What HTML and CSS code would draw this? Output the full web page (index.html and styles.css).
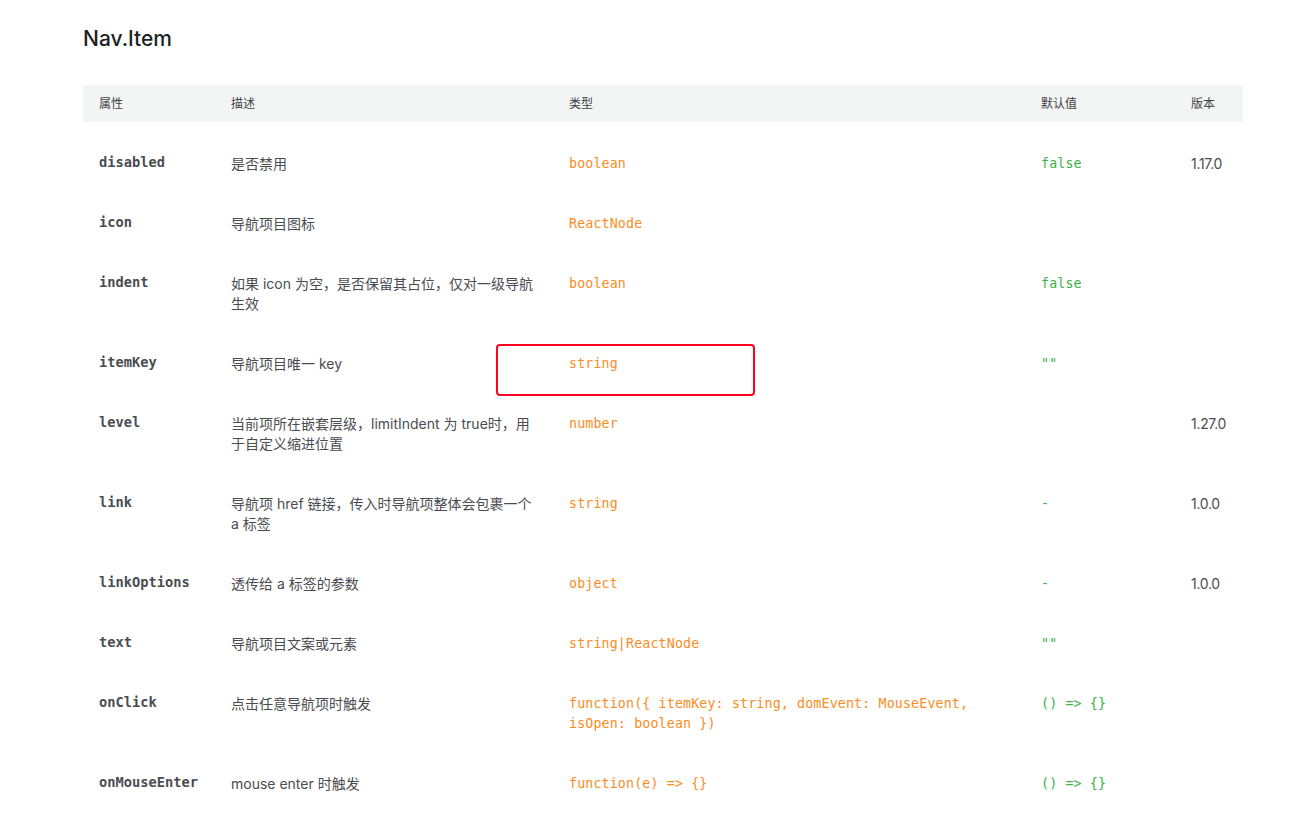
FILE: index.html
```
<!DOCTYPE html>
<html lang="zh-CN">
<head>
<meta charset="utf-8">
<title>Nav.Item</title>
<link rel="stylesheet" href="styles.css">
</head>
<body>
<div class="doc">
  <h3 class="title">Nav.Item</h3>
  <table class="api">
    <colgroup>
      <col class="c-name"><col class="c-desc"><col class="c-type"><col class="c-def"><col class="c-ver">
    </colgroup>
    <thead>
      <tr><th>属性</th><th>描述</th><th>类型</th><th>默认值</th><th>版本</th></tr>
    </thead>
    <tbody>
      <tr><td class="name">disabled</td><td>是否禁用</td><td class="type">boolean</td><td class="def">false</td><td class="ver">1.17.0</td></tr>
      <tr><td class="name">icon</td><td>导航项目图标</td><td class="type">ReactNode</td><td class="def"></td><td class="ver"></td></tr>
      <tr><td class="name">indent</td><td>如果 icon 为空，是否保留其占位，仅对一级导航生效</td><td class="type">boolean</td><td class="def">false</td><td class="ver"></td></tr>
      <tr><td class="name">itemKey</td><td>导航项目唯一 key</td><td class="type">string</td><td class="def">""</td><td class="ver"></td></tr>
      <tr><td class="name">level</td><td>当前项所在嵌套层级，limitIndent 为 true时，用于自定义缩进位置</td><td class="type">number</td><td class="def"></td><td class="ver">1.27.0</td></tr>
      <tr><td class="name">link</td><td>导航项 href 链接，传入时导航项整体会包裹一个 a 标签</td><td class="type">string</td><td class="def">-</td><td class="ver">1.0.0</td></tr>
      <tr><td class="name">linkOptions</td><td>透传给 a 标签的参数</td><td class="type">object</td><td class="def">-</td><td class="ver">1.0.0</td></tr>
      <tr><td class="name">text</td><td>导航项目文案或元素</td><td class="type">string|ReactNode</td><td class="def">""</td><td class="ver"></td></tr>
      <tr><td class="name">onClick</td><td>点击任意导航项时触发</td><td class="type">function({ itemKey: string, domEvent: MouseEvent, isOpen: boolean })</td><td class="def">() =&gt; {}</td><td class="ver"></td></tr>
      <tr><td class="name">onMouseEnter</td><td>mouse enter 时触发</td><td class="type">function(e) =&gt; {}</td><td class="def">() =&gt; {}</td><td class="ver"></td></tr>
    </tbody>
  </table>
  <div class="highlight"></div>
</div>
</body>
</html>
```
FILE: styles.css
```
html, body {
  margin: 0;
  padding: 0;
  background: #fff;
}

body {
  font-family: "Inter", "Noto Sans CJK SC", sans-serif;
  color: #1c1f23;
}

.doc {
  position: relative;
  width: 1308px;
  padding: 24px 0 0 83px;
  box-sizing: border-box;
}

.title {
  margin: 0;
  font-size: 21px;
  line-height: 30px;
  font-weight: 500;
  color: #1c1f23;
}

.api {
  margin-top: 31px;
  width: 1160px;
  table-layout: fixed;
  border-collapse: collapse;
}

.c-name { width: 132px; }
.c-desc { width: 338px; }
.c-type { width: 472px; }
.c-def { width: 150px; }
.c-ver { width: 68px; }

.api th {
  background: #f3f4f4;
  text-align: left;
  font-weight: 400;
  font-size: 12px;
  line-height: 20px;
  height: 37px;
  padding: 0 16px;
  color: #3f4246;
  box-sizing: border-box;
}

.api td {
  vertical-align: top;
  padding: 20px 16px;
  font-size: 14px;
  line-height: 20px;
  color: #4a4c50;
  word-break: break-word;
}

.api tbody tr:first-child td {
  padding-top: 32px;
}

.api td.name {
  font-family: "DejaVu Sans Mono", monospace;
  font-weight: 700;
  font-size: 13.7px;
  line-height: 16px;
  color: #4a4c50;
}

.api td.type,
.api td.def {
  font-family: "DejaVu Sans Mono", monospace;
  font-size: 13.3px;
  letter-spacing: 0.14px;
}

.api td.type {
  color: #fa8c1e;
}

.api td.def {
  color: #3bb346;
}

.api td.ver {
  white-space: nowrap;
  letter-spacing: -0.3px;
}

.highlight {
  position: absolute;
  left: 496px;
  top: 344px;
  width: 259px;
  height: 52px;
  box-sizing: border-box;
  border: 2px solid #ff0020;
  border-radius: 4px;
}
```
